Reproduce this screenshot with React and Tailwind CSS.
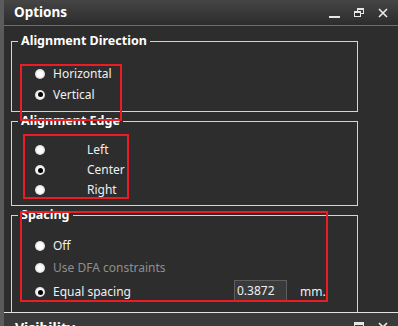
import React from 'react'

const font = { fontFamily: '"Noto Sans", "Open Sans", sans-serif' }

function Radio({ checked }) {
  return (
    <span className="w-[10px] h-[10px] rounded-full shrink-0 flex items-center justify-center bg-[radial-gradient(circle,#ffffff_35%,#bdbdbd_100%)]">
      {checked && <span className="w-[5px] h-[5px] rounded-full bg-black" />}
    </span>
  )
}

function Row({ label, checked, gap = 'ml-[8px]', dim, h = 'h-[21px]', children }) {
  return (
    <div className={`flex items-center pl-[23px] ${h}`}>
      <Radio checked={checked} />
      <span className={`${gap} text-[12px] ${dim ? 'text-[#8f8f8f]' : 'text-[#f0f0f0]'}`}>{label}</span>
      {children}
    </div>
  )
}

function Legend({ children }) {
  return (
    <div className="w-fit -mt-[10px] ml-[6px] px-[3px] bg-[#2d2d2d] text-[12.5px] leading-[18px] font-bold text-white">
      {children}
    </div>
  )
}

export default function App() {
  return (
    <div className="relative w-[398px] h-[326px] flex bg-[#2d2d2d] overflow-hidden" style={font}>
      <div className="w-[4px] bg-[#5b5b5b]" />
      <div className="flex-1 flex flex-col">
        {/* title bar */}
        <div className="h-[26px] shrink-0 flex items-center pl-[10px] pr-[10px] border-b border-[#6e6e6e] bg-linear-to-b from-[#454545] to-[#2c2c2c]">
          <span className="text-[13.5px] font-bold text-white">Options</span>
          <div className="ml-auto flex items-center">
            <span className="w-[11px] h-[2px] bg-[#e6e6e6] mt-[8px]" />
            <svg width="10" height="9" viewBox="0 0 10 9" className="ml-[14px]">
              <rect x="3.5" y="0.5" width="6" height="5" fill="none" stroke="#e6e6e6" />
              <rect x="3.5" y="0.5" width="6" height="1.5" fill="#e6e6e6" />
              <rect x="0.5" y="3.5" width="6" height="5" fill="#2f2f2f" stroke="#e6e6e6" />
              <rect x="0.5" y="3.5" width="6" height="1.5" fill="#e6e6e6" />
            </svg>
            <svg width="10" height="10" viewBox="0 0 10 10" className="ml-[14px]">
              <path d="M1 1 L9 9 M9 1 L1 9" stroke="#ececec" strokeWidth="1.6" />
            </svg>
          </div>
        </div>

        {/* content */}
        <div className="flex-1 overflow-hidden pl-[7px]">
          <div className="mt-[15px] w-[347px] h-[71px] border border-[#d4d4d4]">
            <Legend>Alignment Direction</Legend>
            <div className="mt-[13px]">
              <Row label="Horizontal" />
              <Row label="Vertical" checked />
            </div>
          </div>

          <div className="mt-[9px] w-[347px] h-[85px] border border-[#d4d4d4]">
            <Legend>Alignment Edge</Legend>
            <div className="mt-[10px]">
              <Row label="Left" gap="ml-[42px]" h="h-[20px]" />
              <Row label="Center" checked gap="ml-[42px]" h="h-[20px]" />
              <Row label="Right" gap="ml-[42px]" h="h-[20px]" />
            </div>
          </div>

          <div className="mt-[9px] w-[347px] h-[120px] border border-[#d4d4d4]">
            <Legend>Spacing</Legend>
            <div className="mt-[11px]">
              <Row label="Off" h="h-[22px]" />
              <Row label="Use DFA constraints" dim h="h-[22px]" />
              <div className="flex items-center pl-[23px] h-[24px] mt-[1px]">
                <Radio checked />
                <span className="ml-[8px] w-[181px] text-[12px] text-[#f0f0f0]">Equal spacing</span>
                <div className="self-start w-[53px] h-[22px] border border-[#5e5e5e] bg-[#3a3a3a] flex items-center pl-[2px] text-[12px] text-[#f0f0f0]">
                  0.3872
                </div>
                <span className="ml-[13px] text-[12px] text-[#f0f0f0]">mm.</span>
              </div>
            </div>
          </div>
        </div>

        {/* docked panel below */}
        <div className="h-[14px] shrink-0 border-t border-[#e4e4e4] bg-[#3a3a3a] flex items-start pl-[11px] pr-[10px] overflow-hidden">
          <span className="mt-[6px] text-[14px] leading-[18px] font-bold text-white">Visibility</span>
          <div className="ml-auto flex items-start mt-[9px]">
            <span className="w-[10px] h-[6px] border border-[#e6e6e6] border-t-[3px]" />
            <svg width="10" height="10" viewBox="0 0 10 10" className="ml-[14px]">
              <path d="M1 1 L9 9 M9 1 L1 9" stroke="#ececec" strokeWidth="1.6" />
            </svg>
          </div>
        </div>
      </div>

      {/* red annotation boxes */}
      <div className="absolute left-[20px] top-[64px] w-[102px] h-[57px] border-2 border-[#ed1c24]" />
      <div className="absolute left-[23px] top-[134px] w-[106px] h-[65px] border-2 border-[#ed1c24]" />
      <div className="absolute left-[20px] top-[211px] w-[308px] h-[91px] border-2 border-[#ed1c24]" />
    </div>
  )
}
